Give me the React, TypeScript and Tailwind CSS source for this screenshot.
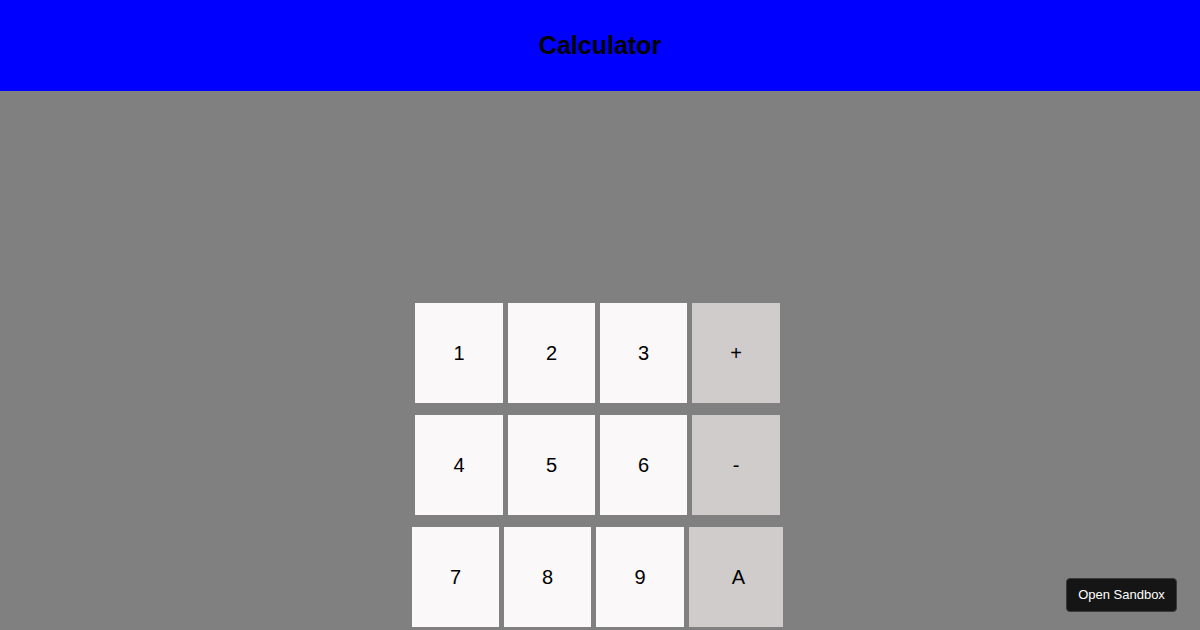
const rows: { label: string; w: string; op?: boolean; pad?: string }[][] = [
  [
    { label: "1", w: "w-[88px]" },
    { label: "2", w: "w-[87px]" },
    { label: "3", w: "w-[87px]" },
    { label: "+", w: "w-[88px]", op: true },
  ],
  [
    { label: "4", w: "w-[88px]" },
    { label: "5", w: "w-[87px]" },
    { label: "6", w: "w-[87px]" },
    { label: "-", w: "w-[88px]", op: true },
  ],
  [
    { label: "7", w: "w-[87px]" },
    { label: "8", w: "w-[87px]" },
    { label: "9", w: "w-[88px]" },
    { label: "A", w: "w-[94px]", op: true, pad: "pl-[5px]" },
  ],
];

export default function App() {
  return (
    <div className="relative h-[630px] overflow-hidden bg-[#808080] font-['Liberation_Sans',Arial,sans-serif]">
      <header className="flex h-[91px] items-center justify-center bg-[#0000ff]">
        <h1 className="text-[25px] font-bold text-black">Calculator</h1>
      </header>

      {/* display area (empty) */}
      <div className="h-[212px]" />

      <div className="flex flex-col items-center gap-[12px] pr-[5px]">
        {rows.map((row, i) => (
          <div key={i} className="flex gap-[5px]">
            {row.map(b => (
              <button
                key={b.label}
                className={`${b.w} ${b.pad ?? ""} h-[100px] text-[20px] text-black ${b.op ? "bg-[#d0cccb]" : "bg-[#faf8f8]"}`}
              >
                {b.label}
              </button>
            ))}
          </div>
        ))}
      </div>

      <button className="absolute left-[1066px] top-[578px] h-[34px] w-[111px] rounded-[4px] border border-[#3a3a3a] bg-[#151515] text-[13px] text-white">
        Open Sandbox
      </button>
    </div>
  );
}
